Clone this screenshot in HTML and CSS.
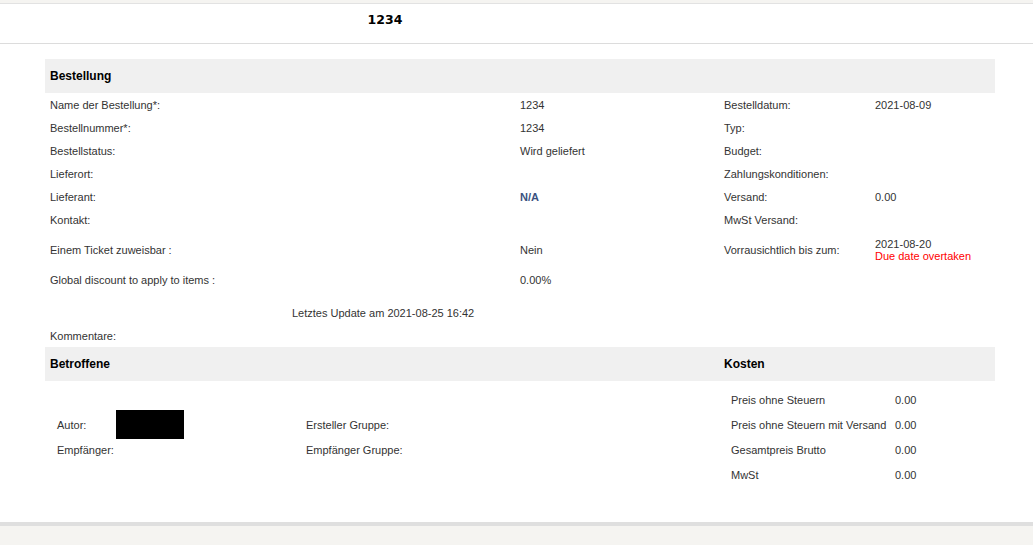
FILE: index.html
```
<!DOCTYPE html>
<html lang="de">
<head>
<meta charset="utf-8">
<title>1234</title>
<link rel="stylesheet" href="styles.css">
</head>
<body>
<div class="topstrip"></div>
<header class="pagehead">
  <div class="title">1234</div>
</header>
<main class="main">
  <div class="sechead"><span>Bestellung</span></div>
  <div class="grid">
    <div class="c">Name der Bestellung*:</div><div class="c">1234</div><div class="c">Bestelldatum:</div><div class="c">2021-08-09</div>
    <div class="c">Bestellnummer*:</div><div class="c">1234</div><div class="c">Typ:</div><div class="c"></div>
    <div class="c">Bestellstatus:</div><div class="c">Wird geliefert</div><div class="c">Budget:</div><div class="c"></div>
    <div class="c">Lieferort:</div><div class="c"></div><div class="c">Zahlungskonditionen:</div><div class="c"></div>
    <div class="c">Lieferant:</div><div class="c"><span class="link">N/A</span></div><div class="c">Versand:</div><div class="c">0.00</div>
    <div class="c">Kontakt:</div><div class="c"></div><div class="c">MwSt Versand:</div><div class="c"></div>
    <div class="c tall">Einem Ticket zuweisbar :</div><div class="c tall">Nein</div><div class="c tall">Vorrausichtlich bis zum:</div><div class="c tall"><div>2021-08-20</div><div class="red">Due date overtaken</div></div>
    <div class="c">Global discount to apply to items :</div><div class="c">0.00%</div><div class="c"></div><div class="c"></div>
    <div class="c update">Letztes Update am 2021-08-25 16:42</div>
    <div class="c full">Kommentare:</div>
  </div>
  <div class="sechead split"><span>Betroffene</span><span>Kosten</span></div>
  <div class="lower">
    <div class="actors">
      <div class="arow first"><span class="al">Autor:</span><span class="redact"></span><span class="gl">Ersteller Gruppe:</span></div>
      <div class="arow"><span class="al">Empfänger:</span><span class="spacer"></span><span class="gl">Empfänger Gruppe:</span></div>
    </div>
    <div class="costs">
      <div class="krow"><span class="kl">Preis ohne Steuern</span><span>0.00</span></div>
      <div class="krow"><span class="kl">Preis ohne Steuern mit Versand</span><span>0.00</span></div>
      <div class="krow"><span class="kl">Gesamtpreis Brutto</span><span>0.00</span></div>
      <div class="krow"><span class="kl">MwSt</span><span>0.00</span></div>
    </div>
  </div>
</main>
</body>
</html>
```
FILE: styles.css
```
html, body {
  margin: 0;
  padding: 0;
}
body {
  background: #f5f4f1;
  font-family: "Liberation Sans", Arial, sans-serif;
  font-size: 11px;
  color: #333;
}
.topstrip {
  height: 3px;
  background: #f5f4f1;
}
.pagehead {
  background: #fff;
  border-top: 1px solid #e2e2e2;
  border-bottom: 1px solid #dcdcdc;
  height: 39px;
  display: flex;
  align-items: flex-start;
}
.title {
  width: 770px;
  text-align: center;
  font-family: "DejaVu Sans", Verdana, sans-serif;
  font-weight: bold;
  font-size: 12.5px;
  line-height: 15px;
  color: #000;
  padding-top: 8px;
}
.main {
  background: #fff;
  padding: 15px 38px 35px 45px;
  border-bottom: 4px solid #dfdfdf;
}
.sechead {
  background: #f0f0f0;
  height: 34px;
  display: flex;
  align-items: center;
  padding-left: 5px;
  font-weight: bold;
  font-size: 12px;
  color: #000;
}
.sechead.split {
  display: grid;
  grid-template-columns: 674px 1fr;
  padding-left: 0;
}
.sechead.split span {
  padding-left: 5px;
}
.grid {
  display: grid;
  grid-template-columns: 470px 204px 151px 125px;
}
.c {
  min-height: 23px;
  display: flex;
  flex-direction: column;
  justify-content: center;
  padding-left: 5px;
}
.c.tall {
  min-height: 37px;
}
.link {
  font-weight: bold;
  color: #3b5280;
}
.red {
  color: #ff0000;
}
.update {
  grid-column: 1 / -1;
  margin-top: 10px;
  padding-left: 247px;
}
.full {
  grid-column: 1 / -1;
}
.lower {
  display: grid;
  grid-template-columns: 674px 1fr;
}
.actors {
  padding-top: 28px;
}
.arow {
  display: flex;
  align-items: center;
  height: 20px;
  padding-left: 12px;
}
.arow.first {
  height: 31px;
}
.al {
  width: 59px;
}
.redact {
  width: 68px;
  height: 29px;
  background: #000;
}
.spacer {
  width: 68px;
}
.gl {
  margin-left: 122px;
}
.costs {
  padding-top: 6px;
  padding-left: 12px;
}
.krow {
  display: flex;
  align-items: center;
  height: 25px;
}
.kl {
  width: 164px;
}
```
